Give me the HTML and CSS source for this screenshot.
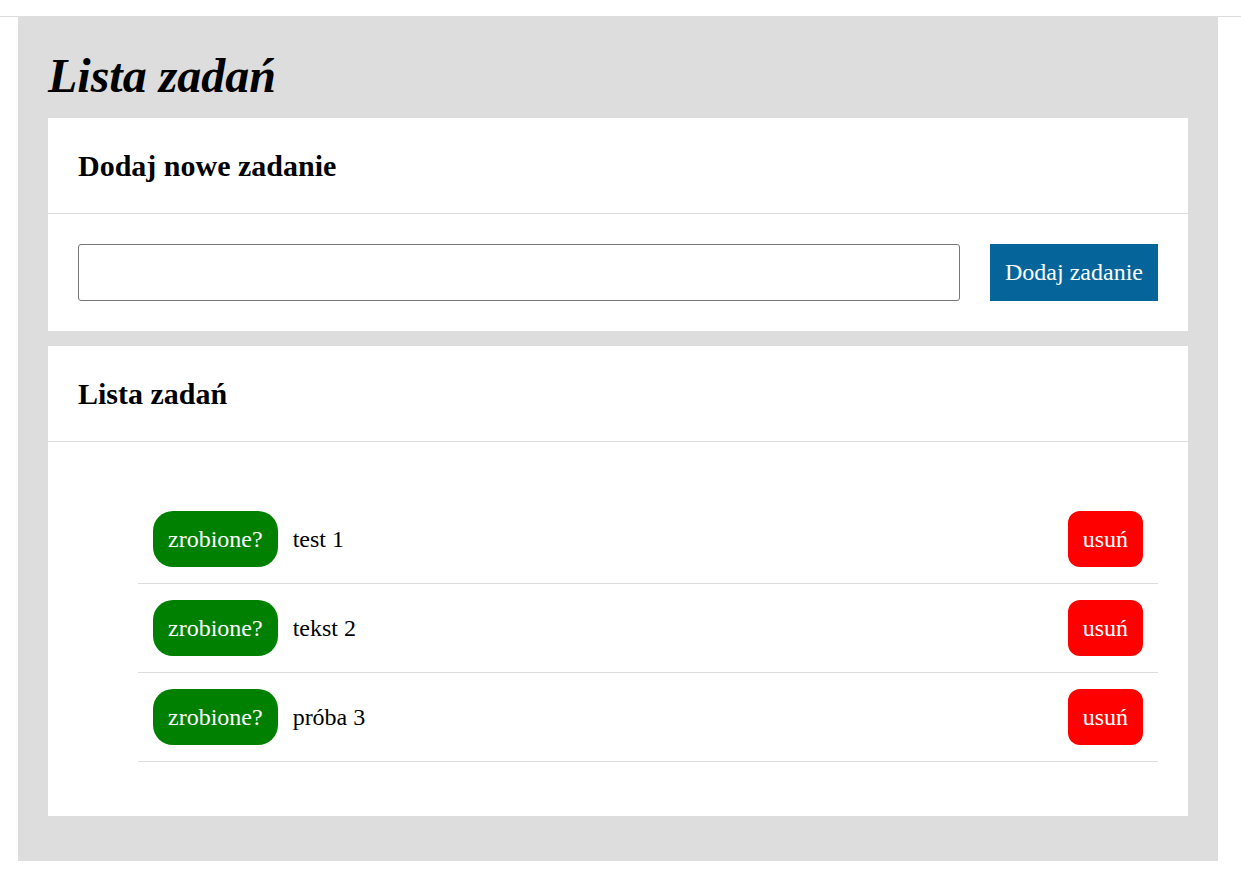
FILE: index.html
```html
<!DOCTYPE html>
<html lang="pl">
<head>
<meta charset="utf-8">
<title>Lista zadań</title>
<link rel="stylesheet" href="styles.css">
</head>
<body>
<div class="topbar"></div>
<main class="container">
  <h1 class="title">Lista zadań</h1>
  <section class="card">
    <div class="card-header"><h2>Dodaj nowe zadanie</h2></div>
    <div class="card-body form-row">
      <input class="task-input" type="text">
      <button class="btn-add">Dodaj zadanie</button>
    </div>
  </section>
  <section class="card">
    <div class="card-header"><h2>Lista zadań</h2></div>
    <div class="card-body">
      <ul class="tasks">
        <li class="task"><button class="btn-done">zrobione?</button><span class="task-text">test 1</span><button class="btn-del">usuń</button></li>
        <li class="task"><button class="btn-done">zrobione?</button><span class="task-text">tekst 2</span><button class="btn-del">usuń</button></li>
        <li class="task"><button class="btn-done">zrobione?</button><span class="task-text">próba 3</span><button class="btn-del">usuń</button></li>
      </ul>
    </div>
  </section>
</main>
</body>
</html>
```

FILE: styles.css
```css
html, body {
  margin: 0;
  padding: 0;
  background: #fff;
  font-family: "Liberation Serif", "Times New Roman", serif;
  font-size: 24px;
  color: #000;
}

.topbar {
  height: 16px;
  border-bottom: 1px solid #ddd;
}

.container {
  width: 1200px;
  margin-left: 18px;
  box-sizing: border-box;
  background: #ddd;
  padding: 0 30px 45px;
  display: flex;
  flex-direction: column;
  gap: 15px;
}

.title {
  margin: 31px 0 0;
  font-size: 48px;
  font-style: italic;
  font-weight: bold;
  line-height: 55px;
}

.card {
  background: #fff;
}

.card-header {
  padding: 30px;
  border-bottom: 1px solid #ddd;
}

.card-header h2 {
  margin: 0;
  font-size: 30px;
  font-weight: bold;
  line-height: 35px;
}

.card-body {
  padding: 30px;
}

.form-row {
  display: flex;
  gap: 30px;
}

.task-input {
  flex: 1;
  height: 57px;
  box-sizing: border-box;
  border: 1px solid #767676;
  border-radius: 3px;
  font-family: inherit;
  font-size: 24px;
  padding: 0 10px;
}

.btn-add {
  width: 168px;
  height: 57px;
  border: none;
  background: #05659a;
  color: #fff;
  font-family: inherit;
  font-size: 24px;
  padding: 0 15px;
}

.tasks {
  list-style: none;
  margin: 23px 0 24px;
  padding: 0 0 0 60px;
}

.task {
  display: flex;
  align-items: center;
  gap: 15px;
  padding: 16px 15px;
  border-bottom: 1px solid #ddd;
}

.task-text {
  flex: 1;
}

.btn-done,
.btn-del {
  height: 56px;
  border: none;
  color: #fff;
  font-family: inherit;
  font-size: 24px;
  padding: 0 15px;
}

.btn-done {
  background: #008000;
  border-radius: 20px;
}

.btn-del {
  background: #ff0000;
  border-radius: 12px;
}
```
